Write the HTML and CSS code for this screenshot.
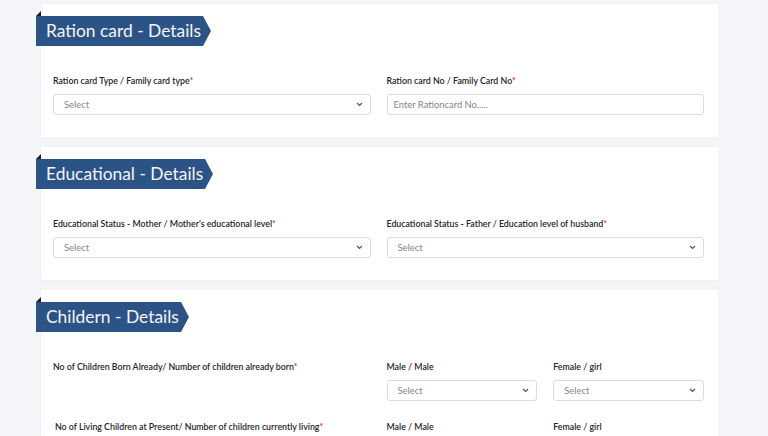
FILE: index.html
```html
<!DOCTYPE html>
<html lang="en">
<head>
<meta charset="utf-8">
<title>Details form</title>
<link rel="stylesheet" href="styles.css">
</head>
<body>
<div class="page">
  <section class="card">
    <h2 class="ribbon">Ration card - Details</h2>
    <div class="grid2">
      <div class="field">
        <label class="lbl">Ration card Type / Family card type<span class="req">*</span></label>
        <div class="control select"><span>Select</span><svg class="chev" width="7" height="5" viewBox="0 0 7 5"><path d="M1 1l2.5 2.5L6 1" fill="none" stroke="#555" stroke-width="1.2"/></svg></div>
      </div>
      <div class="field">
        <label class="lbl">Ration card No / Family Card No<span class="req">*</span></label>
        <div class="control input"><span>Enter Rationcard No.....</span></div>
      </div>
    </div>
  </section>

  <section class="card">
    <h2 class="ribbon">Educational - Details</h2>
    <div class="grid2">
      <div class="field">
        <label class="lbl">Educational Status - Mother / Mother's educational level<span class="req">*</span></label>
        <div class="control select"><span>Select</span><svg class="chev" width="7" height="5" viewBox="0 0 7 5"><path d="M1 1l2.5 2.5L6 1" fill="none" stroke="#555" stroke-width="1.2"/></svg></div>
      </div>
      <div class="field">
        <label class="lbl">Educational Status - Father / Education level of husband<span class="req">*</span></label>
        <div class="control select"><span>Select</span><svg class="chev" width="7" height="5" viewBox="0 0 7 5"><path d="M1 1l2.5 2.5L6 1" fill="none" stroke="#555" stroke-width="1.2"/></svg></div>
      </div>
    </div>
  </section>

  <section class="card">
    <h2 class="ribbon">Childern - Details</h2>
    <div class="rows">
      <div class="grid2">
        <div class="field">
          <label class="lbl">No of Children Born Already/ Number of children already born<span class="req">*</span></label>
        </div>
        <div class="sub2">
          <div class="field">
            <label class="lbl">Male / Male</label>
            <div class="control select"><span>Select</span><svg class="chev" width="7" height="5" viewBox="0 0 7 5"><path d="M1 1l2.5 2.5L6 1" fill="none" stroke="#555" stroke-width="1.2"/></svg></div>
          </div>
          <div class="field">
            <label class="lbl">Female / girl</label>
            <div class="control select"><span>Select</span><svg class="chev" width="7" height="5" viewBox="0 0 7 5"><path d="M1 1l2.5 2.5L6 1" fill="none" stroke="#555" stroke-width="1.2"/></svg></div>
          </div>
        </div>
      </div>
      <div class="grid2">
        <div class="field">
          <label class="lbl lbl-shift">No of Living Children at Present/ Number of children currently living<span class="req">*</span></label>
        </div>
        <div class="sub2">
          <div class="field">
            <label class="lbl">Male / Male</label>
            <div class="control select"><span>Select</span><svg class="chev" width="7" height="5" viewBox="0 0 7 5"><path d="M1 1l2.5 2.5L6 1" fill="none" stroke="#555" stroke-width="1.2"/></svg></div>
          </div>
          <div class="field">
            <label class="lbl">Female / girl</label>
            <div class="control select"><span>Select</span><svg class="chev" width="7" height="5" viewBox="0 0 7 5"><path d="M1 1l2.5 2.5L6 1" fill="none" stroke="#555" stroke-width="1.2"/></svg></div>
          </div>
        </div>
      </div>
    </div>
  </section>
</div>
</body>
</html>
```

FILE: styles.css
```css
* { box-sizing: border-box; }

html, body {
  margin: 0;
  padding: 0;
  height: 100%;
  overflow: hidden;
  background: #f4f5f9;
  font-family: "Lato", "Open Sans", sans-serif;
}

.page {
  padding: 4px 50px 0 41px;
  display: flex;
  flex-direction: column;
  gap: 10px;
}

.card {
  width: 677px;
  background: #ffffff;
  padding: 12px 14px 22px 12px;
  box-shadow: 0 0 2px rgba(0, 0, 0, 0.04);
}

.ribbon {
  position: relative;
  display: inline-block;
  margin: 0 0 0 -17px;
  height: 30px;
  line-height: 30px;
  padding: 0 2px 0 10px;
  background: #2c5385;
  color: #f2f5fa;
  font-size: 17.4px;
  font-weight: 400;
  white-space: nowrap;
}

.ribbon::before {
  content: "";
  position: absolute;
  left: 0;
  top: -5px;
  width: 0;
  height: 0;
  border-left: 5px solid transparent;
  border-bottom: 5px solid #1b1f2a;
}

.ribbon::after {
  content: "";
  position: absolute;
  right: -8px;
  top: 0;
  width: 0;
  height: 0;
  border-top: 15px solid transparent;
  border-bottom: 15px solid transparent;
  border-left: 8px solid #2c5385;
}

.grid2 {
  display: grid;
  grid-template-columns: 1fr 1fr;
  column-gap: 16px;
  margin-top: 29px;
}

.rows {
  display: flex;
  flex-direction: column;
  gap: 20px;
  margin-top: 29px;
}

.rows .grid2 { margin-top: 0; }

.sub2 {
  display: grid;
  grid-template-columns: 1fr 1fr;
  column-gap: 16px;
}

.field {
  display: flex;
  flex-direction: column;
}

.lbl {
  display: block;
  height: 12px;
  line-height: 12px;
  margin-bottom: 7px;
  font-size: 8.8px;
  font-weight: 600;
  color: #23252b;
  white-space: nowrap;
}

.lbl-shift { padding-left: 2px; }

.req { color: #d0283c; }

.control {
  height: 21px;
  border: 1px solid #d9dce3;
  border-radius: 3px;
  background: #fff;
  padding: 0 7px 0 10px;
  display: flex;
  align-items: center;
  justify-content: space-between;
  font-size: 9.4px;
  color: #83868e;
}

.input { padding-left: 6px; }

.chev { display: block; }
```
